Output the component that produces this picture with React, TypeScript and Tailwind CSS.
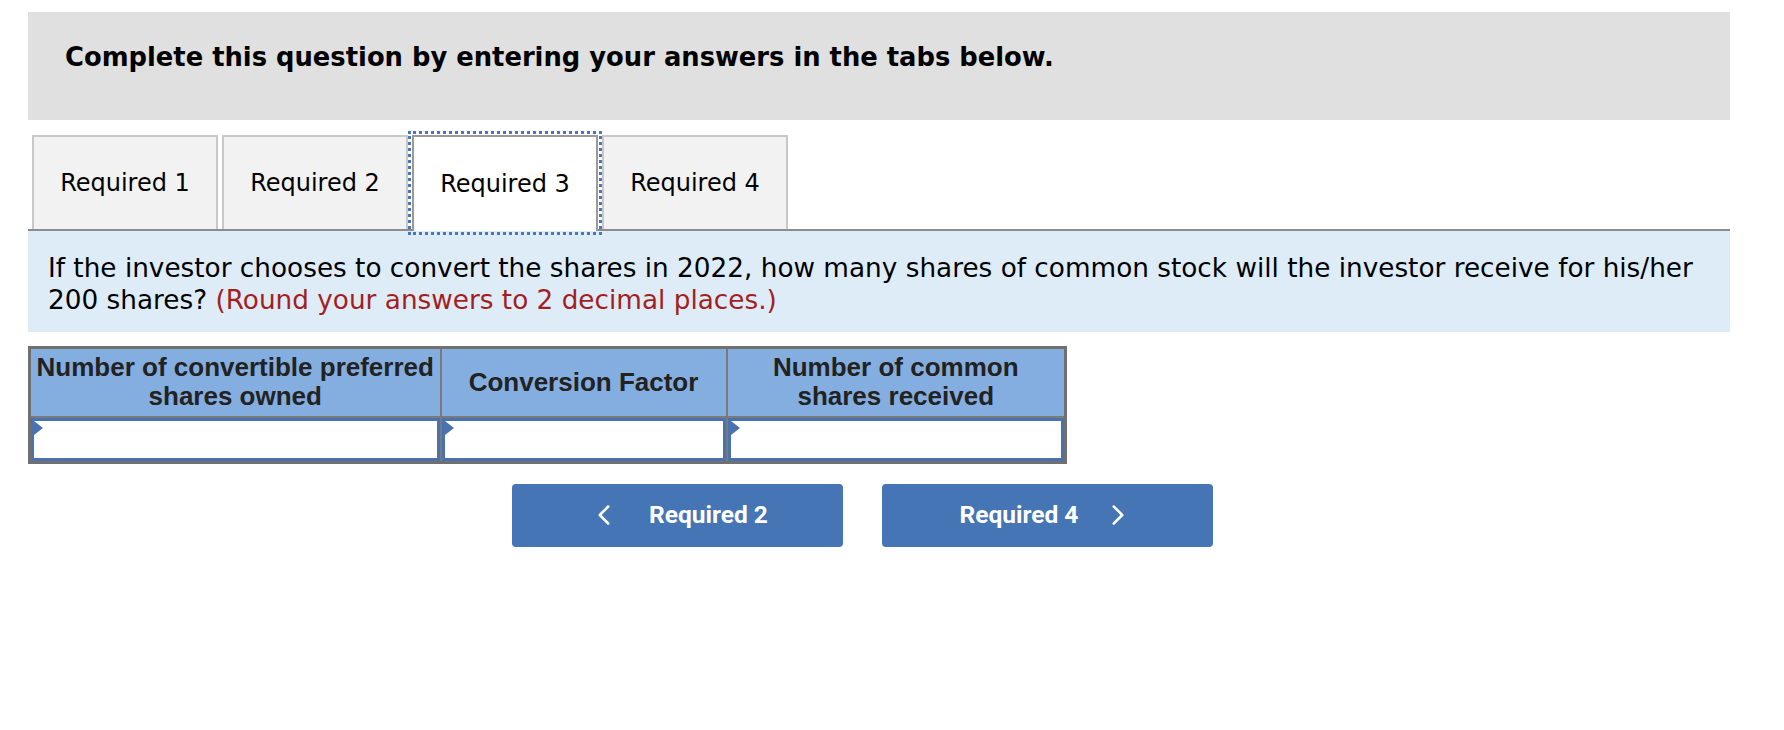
import { ChevronLeft, ChevronRight } from 'lucide-react';

const tabs = ['Required 1', 'Required 2', 'Required 3', 'Required 4'];
const active = 2;

const columns = [
  { label: ['Number of convertible preferred', 'shares owned'], width: 'w-[411px]' },
  { label: ['Conversion Factor'], width: 'w-[286px]' },
  { label: ['Number of common', 'shares received'], width: 'w-[339px]' },
];

function AnswerCell() {
  return (
    <div className="relative h-[43px] border-[3px] border-[#4a72b0] bg-white">
      {/* little marker in the corner of each entry box */}
      <span className="absolute left-0 top-0 h-0 w-0 border-y-[7px] border-l-[9px] border-y-transparent border-l-[#4a72b0]" />
      <input className="h-full w-full bg-transparent px-3 outline-none" />
    </div>
  );
}

export default function App() {
  return (
    <div className="h-[730px] w-[1784px] bg-white font-['DejaVu_Sans',Verdana,sans-serif] text-black">
      <div className="ml-[28px] w-[1702px] pt-[12px]">
        {/* Instructions banner */}
        <div className="h-[108px] bg-[#e0e0e0] pl-[37px] pt-[29px]">
          <h1 className="text-[25.8px] font-bold leading-[32px]">
            Complete this question by entering your answers in the tabs below.
          </h1>
        </div>

        {/* Tabs */}
        <div className="mt-[15px] flex gap-[4px] pl-[4px]">
          {tabs.map((t, i) =>
            i === active ? (
              <button
                key={t}
                className="relative z-10 -mb-[2px] h-[96px] w-[186px] border-2 border-b-0 border-[#9a9a9a] bg-white text-[24px] outline-dotted outline-[3px] outline-offset-[1px] outline-[#4a76c0]"
              >
                {t}
              </button>
            ) : (
              <button
                key={t}
                className="h-[94px] w-[186px] border-2 border-b-0 border-[#c8c8c8] bg-[#f2f2f2] text-[24px]"
              >
                {t}
              </button>
            )
          )}
        </div>

        {/* Question */}
        <div className="border-t-2 border-[#8c8c8c] bg-[#deecf8] pb-[16px] pl-[20px] pr-[30px] pt-[22px] text-[26.3px] leading-[31.5px]">
          If the investor chooses to convert the shares in 2022, how many shares of common stock will the investor receive for his/her 200 shares?{' '}
          <span className="text-[#a31f1f]">(Round your answers to 2 decimal places.)</span>
        </div>

        {/* Answer table */}
        <table className="mt-[14px] border-collapse border-[3px] border-[#707070] font-['Liberation_Sans',Arial,sans-serif]">
          <thead>
            <tr>
              {columns.map((c) => (
                <th
                  key={c.label[0]}
                  className={`${c.width} h-[69px] border-2 border-[#7a7a7a] bg-[#84aee0] px-0 text-center text-[26px] font-bold leading-[29px] text-[#222]`}
                >
                  {c.label.map((l) => (
                    <div key={l}>{l}</div>
                  ))}
                </th>
              ))}
            </tr>
          </thead>
          <tbody>
            <tr>
              {columns.map((c) => (
                <td key={c.label[0]} className="border-2 border-[#7a7a7a] p-0">
                  <AnswerCell />
                </td>
              ))}
            </tr>
          </tbody>
        </table>

        {/* Navigation */}
        <div className="ml-[484px] mt-[20px] flex gap-[39px] font-['Roboto',sans-serif]">
          <button className="flex h-[63px] w-[331px] items-center justify-center gap-[28px] rounded-[4px] bg-[#4575b4] text-[24.5px] font-bold text-white">
            <ChevronLeft size={34} strokeWidth={1.75} />
            <span>Required 2</span>
          </button>
          <button className="flex h-[63px] w-[331px] items-center justify-center gap-[23px] rounded-[4px] bg-[#4575b4] text-[24.5px] font-bold text-white">
            <span>Required 4</span>
            <ChevronRight size={34} strokeWidth={1.75} />
          </button>
        </div>
      </div>
    </div>
  );
}
